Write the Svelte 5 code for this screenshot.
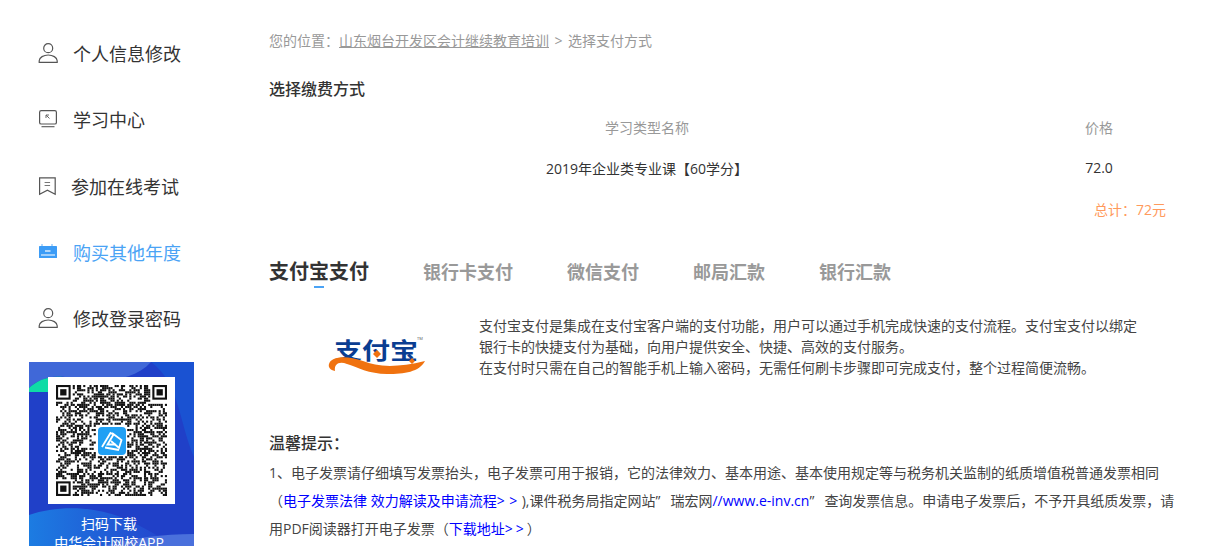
<script>
    let menu = [
        { label: '个人信息修改', icon: 'user' },
        { label: '学习中心', icon: 'screen' },
        { label: '参加在线考试', icon: 'exam', tight: true },
        { label: '购买其他年度', icon: 'card', active: true },
        { label: '修改登录密码', icon: 'user' }
    ];
    let tabs = ['支付宝支付', '银行卡支付', '微信支付', '邮局汇款', '银行汇款'];

    // fake qr pattern, the three finder squares are drawn on top
    const size = 53;
    function genQr() {
        let cells = [];
        let seed = 7331;
        for (let y = 0; y < size; y++) {
            for (let x = 0; x < size; x++) {
                seed = (seed * 1103515245 + 12345) & 0x7fffffff;
                let on = ((seed >> 16) & 7) < 4;
                let inFinder = (x < 8 && y < 8) || (x > 44 && y < 8) || (x < 8 && y > 44);
                let inLogo = x > 18 && x < 34 && y > 18 && y < 34;
                if (on && !inFinder && !inLogo) cells.push({ x, y });
            }
        }
        return cells;
    }
    const cells = genQr();
    const finders = [[0, 0], [46, 0], [0, 46]];
</script>

<div class="page">
    <aside class="side">
        <nav class="menu">
            {#each menu as item}
                <div class="item" class:active={item.active} class:tight={item.tight}>
                    <svg class="icon" viewBox="0 0 18 18" width="18" height="18">
                        {#if item.icon == 'user'}
                            <circle cx="9.2" cy="4.2" r="4.5" fill="none" stroke="#555" stroke-width="1.2" />
                            <path d="M.2 18.4v-1.6C.2 13.4 4.8 11 9.2 11s9 2.4 9 5.8v1.6z" fill="none" stroke="#555" stroke-width="1.2" />
                        {:else if item.icon == 'screen'}
                            <rect x="0.6" y="0.6" width="16.8" height="13.4" rx="1.6" fill="none" stroke="#555" stroke-width="1.2" />
                            <path d="M2.5 16.7h13" stroke="#555" stroke-width="1.1" />
                            <path d="M7 5h3M7 5v3M7 5l3.5 3.5" fill="none" stroke="#666" stroke-width="1" />
                        {:else if item.icon == 'exam'}
                            <path d="M.6 .8h15.6v16.4l-7.8-4-7.8 4z" fill="none" stroke="#555" stroke-width="1.2" />
                            <path d="M5.6 5.5h5.5M5.6 8.5h5.5" stroke="#777" stroke-width="1" />
                        {:else}
                            <rect x="0" y="3" width="18" height="12" rx="0.6" fill="#3c9cf6" />
                            <rect x="2.4" y="1" width="1.2" height="2" fill="#7cbcf8" />
                            <rect x="12.4" y="1" width="1.2" height="2" fill="#7cbcf8" />
                            <path d="M6 8h5.5" stroke="#fff" stroke-width="1.2" />
                            <path d="M2 12h14" stroke="#e2f0fe" stroke-width="1.2" />
                        {/if}
                    </svg>
                    <span>{item.label}</span>
                </div>
            {/each}
        </nav>

        <div class="banner">
            <svg class="waves" viewBox="0 0 165 184" preserveAspectRatio="none">
                <defs>
                    <linearGradient id="wl" x1="0" x2="1" y1="0" y2="0">
                        <stop offset="0" stop-color="#1c7ce2" />
                        <stop offset="1" stop-color="#2442cc" />
                    </linearGradient>
                </defs>
                <path d="M0 0h122C104 20 70 22 36 15 22 13 8 18 0 26z" fill="#4068d8" />
                <path d="M0 26C8 18 22 12 40 16L30 30 0 30z" fill="#0fdca6" />
                <path d="M122 0h43v95C150 60 150 20 122 0z" fill="#1a52d2" />
                <path d="M0 153c30-10 70-10 105 8 16 8 30 16 40 23H0z" fill="url(#wl)" />
                <path d="M75 184c25-8 60-12 90-12v12z" fill="#4a70dc" />
            </svg>
            <div class="qr">
                <svg viewBox="0 0 53 53" width="111" height="111">
                    {#each cells as c}
                        <rect x={c.x} y={c.y} width="1" height="1" fill="#111" />
                    {/each}
                    {#each finders as f}
                        <rect x={f[0] + 0.5} y={f[1] + 0.5} width="6" height="6" fill="none" stroke="#111" />
                        <rect x={f[0] + 2} y={f[1] + 2} width="3" height="3" fill="#111" />
                    {/each}
                </svg>
                <div class="applogo">
                    <svg viewBox="0 0 28 28" width="28" height="28">
                        <path d="M4 20 12.5 6l3 1.5-6 10h8" fill="none" stroke="#fff" stroke-width="1.8" />
                        <path d="M14 6l9.5 7-2.5 8-8-7" fill="none" stroke="#fff" stroke-width="1.8" />
                        <path d="M7 20.5l14 2.5" stroke="#fff" stroke-width="1.8" />
                    </svg>
                </div>
            </div>
            <div class="scan">扫码下载<br>中华会计网校APP</div>
        </div>
    </aside>

    <main class="main">
        <div class="crumb">您的位置：<a href="#top">山东烟台开发区会计继续教育培训</a><span class="sep">&gt;</span>选择支付方式</div>
        <h3 class="title">选择缴费方式</h3>

        <div class="table">
            <div class="row head"><span class="c1">学习类型名称</span><span class="c2">价格</span></div>
            <div class="row"><span class="c1">2019年企业类专业课【60学分】</span><span class="c2">72.0</span></div>
        </div>
        <div class="total">总计：72元</div>

        <div class="tabs">
            {#each tabs as tab, i}
                <div class="tab" class:on={i == 0}>{tab}</div>
            {/each}
        </div>

        <div class="pay">
            <div class="logo">
                <svg viewBox="0 -10 100 54" width="100" height="54">
                    <text x="7" y="26" class="logotext" textLength="84" lengthAdjust="spacingAndGlyphs">支付宝</text>
                    <path d="M2 31C4 23 20 22 36 28 50 34 70 35 98 28 92 39 78 41 60 41 42 41 30 34 20 31 12 28 7 31 8 38 3 37 1 34 2 31z" fill="#f0720f" />
                    <path d="M50 17l4 4-4 4-4-4zM85 25l3 3-3 3-3-3z" fill="#f0720f" />
                    <text x="90" y="7" class="tm">TM</text>
                </svg>
            </div>
            <div class="desc">
                支付宝支付是集成在支付宝客户端的支付功能，用户可以通过手机完成快速的支付流程。支付宝支付以绑定<br>
                银行卡的快捷支付为基础，向用户提供安全、快捷、高效的支付服务。<br>
                在支付时只需在自己的智能手机上输入密码，无需任何刷卡步骤即可完成支付，整个过程简便流畅。
            </div>
        </div>

        <h4 class="tip">温馨提示：</h4>
        <p class="notes">
            1、电子发票请仔细填写发票抬头，电子发票可用于报销，它的法律效力、基本用途、基本使用规定等与税务机关监制的纸质增值税普通发票相同<br>
            （<span class="link">电子发票法律 效力解读及申请流程<span class="gt wide">&gt;&gt;</span></span>),课件税务局指定网站<span class="quote">”</span>瑞宏网<span class="link">//www.e-inv.cn</span><span class="quote">”</span>查询发票信息。申请电子发票后，不予开具纸质发票，请<br>
            用PDF阅读器打开电子发票（<span class="link">下载地址<span class="gt">&gt;&gt;</span></span>）
        </p>
    </main>
</div>

<style>
    :global(body) {
        margin: 0;
        background: #fff;
        font-family: "Open Sans", "Noto Sans CJK SC", sans-serif;
        overflow: hidden;
    }

    .page {
        display: flex;
        height: 546px;
        overflow: hidden;
    }

    .side {
        width: 269px;
        flex: none;
    }

    .menu {
        padding-top: 20px;
    }

    .item {
        display: flex;
        align-items: center;
        height: 66.25px;
        padding-left: 39px;
        font-size: 18px;
        color: #333;
    }

    .icon {
        overflow: visible;
    }

    .item span {
        margin-left: 16px;
    }

    .item.tight span {
        margin-left: 14px;
    }

    .item.active {
        color: #4aa3f5;
    }

    .banner {
        position: relative;
        width: 165px;
        height: 184px;
        margin: 11px 0 0 29px;
        background: #2040c8;
        overflow: hidden;
        text-align: center;
        color: #fff;
    }

    .waves {
        position: absolute;
        inset: 0;
        width: 100%;
        height: 100%;
    }

    .qr {
        position: relative;
        width: 127px;
        height: 127px;
        margin: 15px 0 0 19px;
        background: #fff;
        display: flex;
        align-items: center;
        justify-content: center;
    }

    .applogo {
        position: absolute;
        left: 50px;
        top: 50px;
        width: 28px;
        height: 28px;
        border-radius: 4px;
        background: #20a0f4;
    }

    .scan {
        position: relative;
        margin-top: 10px;
        padding-right: 5px;
        font-size: 14px;
        line-height: 19px;
    }

    .main {
        width: 915px;
        flex: none;
        color: #333;
    }

    .crumb {
        margin-top: 32px;
        font-size: 14px;
        line-height: 18px;
        color: #999;
    }

    .crumb a {
        color: #999;
    }

    .sep {
        margin: 0 5.5px;
    }

    .title {
        margin: 27px 0 0;
        font-size: 16px;
        line-height: 24px;
        font-weight: 500;
        color: #333;
    }

    .table {
        margin-top: 5px;
        font-size: 14px;
    }

    .row {
        display: flex;
        height: 41px;
        align-items: center;
    }

    .head {
        color: #999;
    }

    .c1 {
        width: 756px;
        text-align: center;
    }

    .c2 {
        width: 148px;
        text-align: center;
    }

    .total {
        width: 897px;
        margin-top: 13px;
        font-size: 14px;
        line-height: 18px;
        text-align: right;
        color: #ff9a5c;
    }

    .tabs {
        display: flex;
        gap: 54px;
        margin-top: 40px;
        font-size: 18px;
        font-weight: 700;
        line-height: 26px;
        color: #999;
    }

    .tab {
        position: relative;
        padding-bottom: 2px;
    }

    .tab.on {
        color: #333;
        font-size: 20px;
    }

    .tab.on::after {
        content: "";
        position: absolute;
        left: 45px;
        bottom: -1px;
        width: 10px;
        height: 2px;
        background: #4aa3f5;
    }

    .pay {
        display: flex;
        margin-top: 28px;
    }

    .logo {
        width: 210px;
        padding: 8px 0 0 58px;
        box-sizing: border-box;
    }

    .logotext {
        font-family: "Noto Sans CJK SC", sans-serif;
        font-size: 23px;
        font-weight: 700;
        fill: #0a3d91;
    }

    .tm {
        font-size: 4px;
        fill: #555;
    }

    .desc {
        font-size: 14px;
        line-height: 21px;
        color: #444;
    }

    .tip {
        margin: 49px 0 0;
        font-size: 16px;
        line-height: 24px;
        font-weight: 500;
    }

    .notes {
        margin: 4px 0 0;
        font-size: 14px;
        line-height: 28px;
        color: #444;
    }

    .link {
        color: #00f;
    }

    .gt {
        letter-spacing: 3px;
    }

    .gt.wide {
        letter-spacing: 4.5px;
    }

    .quote {
        display: inline-block;
        width: 15px;
    }
</style>
